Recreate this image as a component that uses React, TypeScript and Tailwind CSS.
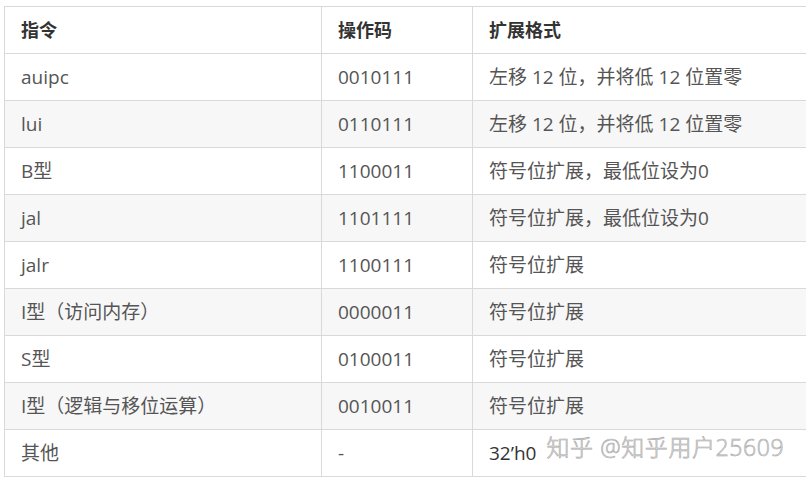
import React from "react";

const rows: [string, string, string][] = [
	["auipc", "0010111", "左移 12 位，并将低 12 位置零"],
	["lui", "0110111", "左移 12 位，并将低 12 位置零"],
	["B型", "1100011", "符号位扩展，最低位设为0"],
	["jal", "1101111", "符号位扩展，最低位设为0"],
	["jalr", "1100111", "符号位扩展"],
	["I型（访问内存）", "0000011", "符号位扩展"],
	["S型", "0100011", "符号位扩展"],
	["I型（逻辑与移位运算）", "0010011", "符号位扩展"],
];

const font = "font-['Open_Sans','Noto_Sans_CJK_SC',sans-serif]";

function Cell(props: { children: React.ReactNode; w: string; bold?: boolean }): JSX.Element {
	return (
		<div
			className={`${props.w} shrink-0 flex items-center pl-[16px] border-r border-[#d9d9d9] ${
				props.bold ? "font-bold text-[#333] text-[18px]" : "text-[#555]"
			}`}
		>
			{props.children}
		</div>
	);
}

export default function App(): JSX.Element {
	return (
		<div className={`w-[806px] h-[477px] overflow-hidden bg-white pt-[6px] pl-[4px] ${font} text-[19px]`}>
			<div className="w-[830px] border-l border-t border-[#d9d9d9]">
				<div className="flex h-[47px] border-b border-[#d9d9d9]">
					<Cell w="w-[317px]" bold>指令</Cell>
					<Cell w="w-[151px]" bold>操作码</Cell>
					<Cell w="flex-1" bold>扩展格式</Cell>
				</div>
				{rows.map((r, i) => (
					<div
						key={i}
						className={`flex h-[47px] border-b border-[#d9d9d9] ${i % 2 === 1 ? "bg-[#f7f7f7]" : "bg-white"}`}
					>
						<Cell w="w-[317px]">{r[0]}</Cell>
						<Cell w="w-[151px]">{r[1]}</Cell>
						<Cell w="flex-1">{r[2]}</Cell>
					</div>
				))}
				<div className="flex h-[47px] border-b border-[#d9d9d9]">
					<Cell w="w-[317px]">其他</Cell>
					<Cell w="w-[151px]">-</Cell>
					<div className="flex-1 flex items-center pl-[16px]">
						<span className="text-[#333]">32’h0</span>
						<span className="ml-[10px] mt-[-12px] text-[23px] tracking-[0.6px] font-light text-[#ececec] [-webkit-text-stroke:0.6px_#a8a8a8]">
							知乎 @知乎用户25609
						</span>
					</div>
				</div>
			</div>
		</div>
	);
}
